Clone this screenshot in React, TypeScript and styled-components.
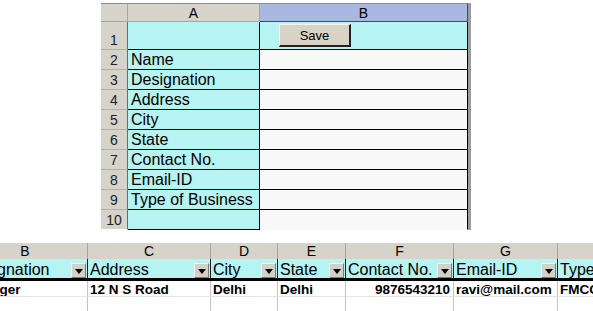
import * as React from 'react';
import styled, { createGlobalStyle } from 'styled-components';

const GlobalStyle = createGlobalStyle`
  html, body {
    margin: 0;
    padding: 0;
    background: #ffffff;
    overflow: hidden;
  }
  body {
    width: 593px;
    height: 311px;
    font-family: "Liberation Sans", Arial, sans-serif;
    color: #000;
  }
`;

const GRAY = '#d6d3cb';
const CYAN = '#b6f3f3';

const Page = styled.div`
  display: flex;
  flex-direction: column;
  width: 593px;
  height: 311px;
  overflow: hidden;
`;

/* ---------- top form sheet ---------- */

const Sheet = styled.div`
  display: grid;
  grid-template-columns: 27px 132px 208px;
  grid-template-rows: 19px 28px repeat(9, 20px);
  margin: 3px 0 0 101px;
  width: 367px;
  border-right: 3px solid #9c9c9c;
`;

const Corner = styled.div`
  background: ${GRAY};
  border-top: 1px solid #8c8c8c;
  border-right: 1px solid #a8a59c;
  border-bottom: 1px solid #a8a59c;
  box-sizing: border-box;
`;

const ColHead = styled.div<{ $selected?: boolean }>`
  box-sizing: border-box;
  display: flex;
  align-items: center;
  justify-content: center;
  font-size: 14px;
  background: ${(p) => (p.$selected ? '#a8b8e0' : GRAY)};
  border-top: 1px solid #8c8c8c;
  border-right: 1px solid ${(p) => (p.$selected ? '#3a4a78' : '#a8a59c')};
  border-bottom: 1px solid ${(p) => (p.$selected ? '#3a4a78' : '#a8a59c')};
`;

const RowHead = styled.div<{ $last?: boolean }>`
  box-sizing: border-box;
  display: flex;
  align-items: flex-end;
  justify-content: center;
  padding-bottom: 0;
  font-size: 14px;
  line-height: 17px;
  color: #222;
  background: ${GRAY};
  border-right: 1px solid #6e6c66;
  border-bottom: 1px solid ${(p) => (p.$last ? '#ffffff' : '#b4b1a8')};
`;

const LabelCell = styled.div`
  box-sizing: border-box;
  display: flex;
  align-items: flex-end;
  padding: 0 0 0 3px;
  font-size: 16px;
  line-height: 18px;
  white-space: nowrap;
  background: ${CYAN};
  border-right: 1px solid #000;
  border-bottom: 1px solid #000;
`;

const InputCell = styled.div<{ $tint?: boolean; $last?: boolean }>`
  box-sizing: border-box;
  background: ${(p) => (p.$tint ? CYAN : '#f8f8f8')};
  border-right: 1px solid #000;
  border-bottom: 1px solid ${(p) => (p.$last ? '#f8f8f8' : '#000')};
  padding: 2px 0 0 19px;
`;

const SaveButton = styled.button`
  box-sizing: border-box;
  width: 72px;
  height: 23px;
  padding: 0;
  font-family: "Liberation Sans", Arial, sans-serif;
  font-size: 13px;
  color: #000;
  background: #d8d3c4;
  border-style: solid;
  border-width: 1px 2px 2px 1px;
  border-color: #f4f2ec #222 #222 #f4f2ec;
`;

/* ---------- bottom filtered list ---------- */

const ListGrid = styled.div`
  display: grid;
  grid-template-columns: 125px 123px 67px 68px 108px 104px 150px;
  grid-template-rows: 16px 22px 16px 16px;
  margin: 13px 0 0 -37px;
`;

const Letter = styled.div`
  box-sizing: border-box;
  display: flex;
  align-items: center;
  justify-content: center;
  font-size: 14px;
  line-height: 14px;
  background: ${GRAY};
  border-right: 1px solid #a8a59c;
`;

const FilterCell = styled.div`
  box-sizing: border-box;
  position: relative;
  display: flex;
  align-items: flex-end;
  padding: 0 0 0 2px;
  font-size: 16px;
  line-height: 17px;
  white-space: nowrap;
  overflow: hidden;
  background: ${CYAN};
  border-right: 1px solid #1a1a1a;
  border-bottom: 3px solid #000;
`;

const DropButton = styled.span`
  position: absolute;
  right: 1px;
  bottom: 0;
  box-sizing: border-box;
  width: 15px;
  height: 15px;
  display: flex;
  align-items: center;
  justify-content: center;
  padding-top: 2px;
  background: #d4d0c6;
  border-style: solid;
  border-width: 1px;
  border-color: #f6f4ee #7c7a74 #7c7a74 #f6f4ee;
`;

const DataCell = styled.div<{ $right?: boolean; $empty?: boolean }>`
  box-sizing: border-box;
  display: flex;
  align-items: center;
  justify-content: ${(p) => (p.$right ? 'flex-end' : 'flex-start')};
  padding: 1px 3px 0 2px;
  font-size: 13.5px;
  font-weight: bold;
  white-space: nowrap;
  overflow: hidden;
  background: #ffffff;
  border-right: 1px solid #c4c4c4;
  border-bottom: ${(p) => (p.$empty ? 'none' : '1px solid #e6e6e6')};
`;

const Arrow = () => (
  <svg width="8" height="5" viewBox="0 0 8 5">
    <polygon points="0,0 8,0 4,5" fill="#000" />
  </svg>
);

const labels = [
  'Name',
  'Designation',
  'Address',
  'City',
  'State',
  'Contact No.',
  'Email-ID',
  'Type of Business',
  '',
];

const columns = [
  { letter: 'B', field: 'Designation', value: 'Manager', right: false },
  { letter: 'C', field: 'Address', value: '12 N S Road', right: false },
  { letter: 'D', field: 'City', value: 'Delhi', right: false },
  { letter: 'E', field: 'State', value: 'Delhi', right: false },
  { letter: 'F', field: 'Contact No.', value: '9876543210', right: true },
  { letter: 'G', field: 'Email-ID', value: 'ravi@mail.com', right: false },
  { letter: '', field: 'Type of Business', value: 'FMCG', right: false },
];

const App: React.FC = () => {
  return (
    <Page>
      <GlobalStyle />
      <Sheet>
        <Corner />
        <ColHead>A</ColHead>
        <ColHead $selected>B</ColHead>

        <RowHead>1</RowHead>
        <LabelCell />
        <InputCell $tint>
          <SaveButton>Save</SaveButton>
        </InputCell>

        {labels.map((label, i) => {
          const last = i === labels.length - 1;
          return (
            <React.Fragment key={i}>
              <RowHead $last={last}>{i + 2}</RowHead>
              <LabelCell>{label}</LabelCell>
              <InputCell $last={last} />
            </React.Fragment>
          );
        })}
      </Sheet>

      <ListGrid>
        {columns.map((c) => (
          <Letter key={'l' + c.field}>{c.letter}</Letter>
        ))}
        {columns.map((c, i) => (
          <FilterCell key={'f' + c.field}>
            {c.field}
            {i < columns.length - 1 && (
              <DropButton>
                <Arrow />
              </DropButton>
            )}
          </FilterCell>
        ))}
        {columns.map((c) => (
          <DataCell key={'d' + c.field} $right={c.right}>
            {c.value}
          </DataCell>
        ))}
        {columns.map((c) => (
          <DataCell key={'e' + c.field} $empty />
        ))}
      </ListGrid>
    </Page>
  );
};

export default App;
